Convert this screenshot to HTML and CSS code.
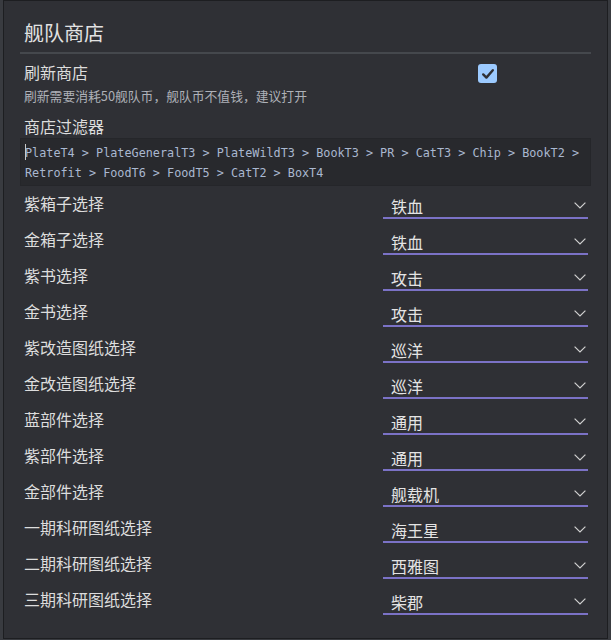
FILE: index.html
```html
<!DOCTYPE html>
<html lang="zh-CN">
<head>
<meta charset="utf-8">
<title>舰队商店</title>
<link rel="stylesheet" href="styles.css">
</head>
<body>
<div class="panel">
  <div class="header"><h1 class="title">舰队商店</h1></div>
  <div class="content">
    <div class="refresh">
      <div class="refresh-text">
        <div class="label">刷新商店</div>
        <div class="desc">刷新需要消耗50舰队币，舰队币不值钱，建议打开</div>
      </div>
      <div class="checkbox">
        <svg width="14" height="14" viewBox="0 0 14 14"><path d="M2.2 7.4 L5.4 10.6 L11.8 3.2" fill="none" stroke="#2f3035" stroke-width="2.4" stroke-linecap="round" stroke-linejoin="round"/></svg>
      </div>
    </div>
    <div class="label">商店过滤器</div>
  </div>
  <div class="filter"><span class="caret"></span>PlateT4 &gt; PlateGeneralT3 &gt; PlateWildT3 &gt; BookT3 &gt; PR &gt; CatT3 &gt; Chip &gt; BookT2 &gt; Retrofit &gt; FoodT6 &gt; FoodT5 &gt; CatT2 &gt; BoxT4</div>
  <div class="rows content">
    <div class="row"><div class="label">紫箱子选择</div><div class="select"><span>铁血</span><svg class="chev" width="12" height="7" viewBox="0 0 12 7"><path d="M0.6 0.6 L6 6 L11.4 0.6" fill="none" stroke="#d0d0d0" stroke-width="1.2"/></svg></div></div>
    <div class="row"><div class="label">金箱子选择</div><div class="select"><span>铁血</span><svg class="chev" width="12" height="7" viewBox="0 0 12 7"><path d="M0.6 0.6 L6 6 L11.4 0.6" fill="none" stroke="#d0d0d0" stroke-width="1.2"/></svg></div></div>
    <div class="row"><div class="label">紫书选择</div><div class="select"><span>攻击</span><svg class="chev" width="12" height="7" viewBox="0 0 12 7"><path d="M0.6 0.6 L6 6 L11.4 0.6" fill="none" stroke="#d0d0d0" stroke-width="1.2"/></svg></div></div>
    <div class="row"><div class="label">金书选择</div><div class="select"><span>攻击</span><svg class="chev" width="12" height="7" viewBox="0 0 12 7"><path d="M0.6 0.6 L6 6 L11.4 0.6" fill="none" stroke="#d0d0d0" stroke-width="1.2"/></svg></div></div>
    <div class="row"><div class="label">紫改造图纸选择</div><div class="select"><span>巡洋</span><svg class="chev" width="12" height="7" viewBox="0 0 12 7"><path d="M0.6 0.6 L6 6 L11.4 0.6" fill="none" stroke="#d0d0d0" stroke-width="1.2"/></svg></div></div>
    <div class="row"><div class="label">金改造图纸选择</div><div class="select"><span>巡洋</span><svg class="chev" width="12" height="7" viewBox="0 0 12 7"><path d="M0.6 0.6 L6 6 L11.4 0.6" fill="none" stroke="#d0d0d0" stroke-width="1.2"/></svg></div></div>
    <div class="row"><div class="label">蓝部件选择</div><div class="select"><span>通用</span><svg class="chev" width="12" height="7" viewBox="0 0 12 7"><path d="M0.6 0.6 L6 6 L11.4 0.6" fill="none" stroke="#d0d0d0" stroke-width="1.2"/></svg></div></div>
    <div class="row"><div class="label">紫部件选择</div><div class="select"><span>通用</span><svg class="chev" width="12" height="7" viewBox="0 0 12 7"><path d="M0.6 0.6 L6 6 L11.4 0.6" fill="none" stroke="#d0d0d0" stroke-width="1.2"/></svg></div></div>
    <div class="row"><div class="label">金部件选择</div><div class="select"><span>舰载机</span><svg class="chev" width="12" height="7" viewBox="0 0 12 7"><path d="M0.6 0.6 L6 6 L11.4 0.6" fill="none" stroke="#d0d0d0" stroke-width="1.2"/></svg></div></div>
    <div class="row"><div class="label">一期科研图纸选择</div><div class="select"><span>海王星</span><svg class="chev" width="12" height="7" viewBox="0 0 12 7"><path d="M0.6 0.6 L6 6 L11.4 0.6" fill="none" stroke="#d0d0d0" stroke-width="1.2"/></svg></div></div>
    <div class="row"><div class="label">二期科研图纸选择</div><div class="select"><span>西雅图</span><svg class="chev" width="12" height="7" viewBox="0 0 12 7"><path d="M0.6 0.6 L6 6 L11.4 0.6" fill="none" stroke="#d0d0d0" stroke-width="1.2"/></svg></div></div>
    <div class="row"><div class="label">三期科研图纸选择</div><div class="select"><span>柴郡</span><svg class="chev" width="12" height="7" viewBox="0 0 12 7"><path d="M0.6 0.6 L6 6 L11.4 0.6" fill="none" stroke="#d0d0d0" stroke-width="1.2"/></svg></div></div>
  </div>
</div>
</body>
</html>
```

FILE: styles.css
```css
html, body {
  margin: 0;
  padding: 0;
}
body {
  background: #393b40;
  font-family: "Noto Sans CJK SC", "Noto Sans", sans-serif;
  color: #dcdcdc;
  width: 611px;
  height: 640px;
  overflow: hidden;
}
.panel {
  box-sizing: border-box;
  margin-left: 3px;
  width: 605px;
  height: 639px;
  border: 1px solid #1d1e21;
  background: #2f3035;
}
.header {
  margin: 0 16px;
  padding-top: 18px;
  padding-bottom: 5px;
  border-bottom: 2px solid #45484d;
}
.title {
  margin: 0;
  padding-left: 4px;
  font-size: 20px;
  font-weight: normal;
  line-height: 28px;
  color: #e2e2e2;
}
.content {
  padding-left: 20px;
  padding-right: 20px;
}
.refresh {
  display: flex;
  align-items: flex-start;
  margin-top: 7px;
}
.refresh-text {
  flex: 1;
}
.label {
  font-size: 16px;
  line-height: 22px;
  color: #dddddd;
}
.desc {
  font-size: 12.8px;
  line-height: 18px;
  margin-top: 4px;
  color: #aeb1b8;
}
.checkbox {
  width: 19px;
  height: 19px;
  margin-top: 3px;
  margin-right: 90px;
  border-radius: 3px;
  background: #9ccaff;
  display: flex;
  align-items: center;
  justify-content: center;
}
.refresh + .label {
  margin-top: 10px;
}
.filter {
  box-sizing: border-box;
  margin: 1px 16px 0 16px;
  height: 48px;
  padding: 4px 4px 2px 4px;
  border: 1px solid #25262a;
  background: #28292d;
  font-family: "DejaVu Sans Mono", "Liberation Mono", monospace;
  font-size: 11.8px;
  line-height: 20px;
  color: #aab8d0;
}
.caret {
  display: inline-block;
  width: 1px;
  height: 16px;
  margin-right: -1px;
  vertical-align: -3px;
  background: #c8c8c8;
}
.rows {
  margin-top: 6px;
}
.row {
  display: flex;
  justify-content: space-between;
  height: 36px;
}
.select {
  box-sizing: border-box;
  width: 205px;
  height: 24px;
  margin-top: 3px;
  margin-right: -1px;
  padding: 0 2px 0 8px;
  border-bottom: 2px solid #7b72c6;
  display: flex;
  align-items: center;
  justify-content: space-between;
  font-size: 16px;
  line-height: 22px;
  color: #e4e4e4;
}
.chev {
  display: block;
  margin-top: -2px;
}
```
